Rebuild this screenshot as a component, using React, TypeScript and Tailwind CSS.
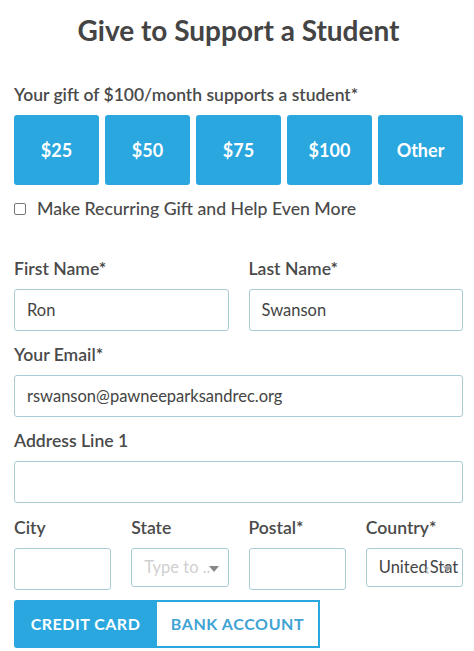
const amounts = ['$25', '$50', '$75', '$100', 'Other'];

const Label: React.FC<{ text: string }> = ({ text }) => (
  <div className="h-6 text-[17.6px] leading-6 font-semibold text-[#4a4a4a] whitespace-nowrap">{text}</div>
);

const TextInput: React.FC<{ value?: string }> = ({ value }) => (
  <div className="mt-2 h-[42px] rounded-[3px] border border-[#a9cbd6] bg-white px-3 flex items-center text-[16.5px] text-[#444]">
    {value}
  </div>
);

export default function App() {
  return (
    <div
      className="w-[474px] h-[651px] overflow-hidden bg-white pl-[14px] pr-[11px]"
      style={{ fontFamily: 'Lato, "Open Sans", sans-serif' }}
    >
      <h1 className="mt-3 h-9 text-center text-[28px] leading-9 font-bold text-[#444]">
        Give to Support a Student
      </h1>

      <div className="mt-[35px] text-[17.5px] leading-6 font-semibold text-[#4a4a4a]">
        Your gift of $100/month supports a student*
      </div>
      <div className="mt-2 grid grid-cols-5 gap-[6px]">
        {amounts.map((a) => (
          <button
            key={a}
            className="h-[70px] rounded-[3px] bg-[#2aa7df] text-white text-[18px] font-bold"
          >
            {a}
          </button>
        ))}
      </div>

      <div className="mt-3 flex items-center h-6">
        <span className="w-3 h-3 rounded-[2px] border border-[#777] bg-white" />
        <span className="ml-[11px] text-[17.7px] font-medium text-[#4a4a4a]">
          Make Recurring Gift and Help Even More
        </span>
      </div>

      <div className="mt-9 grid grid-cols-2 gap-x-5">
        <div>
          <Label text="First Name*" />
          <TextInput value="Ron" />
        </div>
        <div>
          <Label text="Last Name*" />
          <TextInput value="Swanson" />
        </div>
      </div>

      <div className="mt-3">
        <Label text="Your Email*" />
        <TextInput value="rswanson@pawneeparksandrec.org" />
      </div>

      <div className="mt-3">
        <Label text="Address Line 1" />
        <TextInput />
      </div>

      <div className="mt-[13px] grid grid-cols-4 gap-x-5">
        <div>
          <Label text="City" />
          <TextInput />
        </div>
        <div>
          <Label text="State" />
          <div className="mt-2 h-[39px] rounded-[3px] border border-[#a9cbd6] bg-white pl-3 pr-2 flex items-center text-[16.5px] text-[#d0d0d0]">
            <span className="whitespace-nowrap">Type to ..</span>
            <svg width="10" height="6" viewBox="0 0 10 6" className="-ml-[2px] mt-[2px]">
              <path d="M0 0h10L5 6z" fill="#888" />
            </svg>
          </div>
        </div>
        <div>
          <Label text="Postal*" />
          <TextInput />
        </div>
        <div>
          <Label text="Country*" />
          <div className="relative mt-2 h-[39px] rounded-[3px] border border-[#a9cbd6] bg-white flex items-center overflow-hidden text-[16.5px] text-[#444]">
            <span className="pl-3 whitespace-nowrap">United</span>
            <span className="text-[#bbb] text-[18px] leading-none -ml-[3px]">‹</span>
            <span className="whitespace-nowrap">Stat</span>
            <svg width="9" height="6" viewBox="0 0 10 6" className="absolute left-[76px] top-[17px]">
              <path d="M0 0h10L5 6z" fill="#999" />
            </svg>
          </div>
        </div>
      </div>

      <div className="mt-[10px] flex h-12 w-[306px]">
        <div className="w-[143px] h-full rounded-l-[3px] bg-[#2aa7df] flex items-center justify-center text-white text-[16px] font-bold tracking-[0.5px]">
          CREDIT CARD
        </div>
        <div className="flex-1 h-full border-2 border-l-0 border-[#2aa7df] bg-white flex items-center justify-center text-[#3fa3d3] text-[16px] font-bold tracking-[0.6px]">
          BANK ACCOUNT
        </div>
      </div>
    </div>
  );
}
